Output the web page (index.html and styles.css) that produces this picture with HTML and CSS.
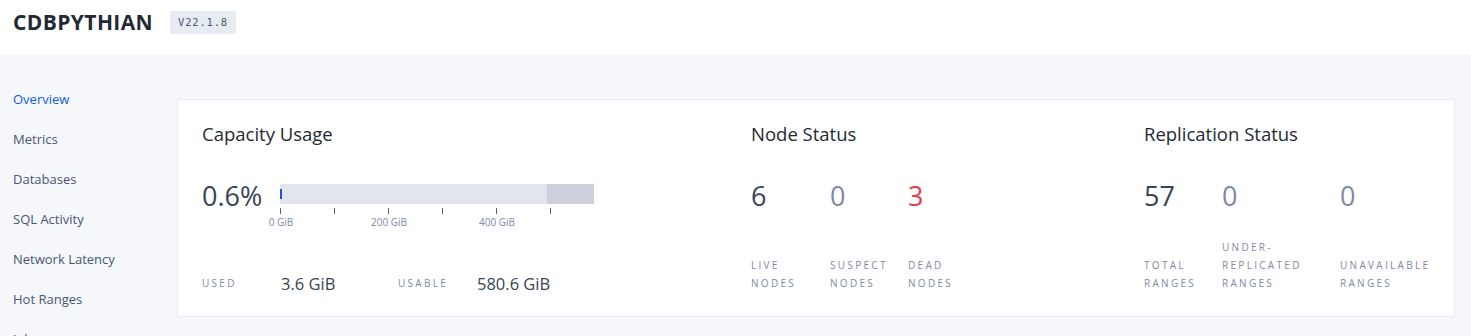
FILE: index.html
```html
<!DOCTYPE html>
<html>
<head>
<meta charset="utf-8">
<link rel="stylesheet" href="styles.css">
</head>
<body>
<header class="topbar">
  <div class="cluster-name">CDBPYTHIAN</div>
  <div class="version">V22.1.8</div>
</header>
<div class="layout">
  <nav class="sidenav">
    <a class="nav-item active">Overview</a>
    <a class="nav-item">Metrics</a>
    <a class="nav-item">Databases</a>
    <a class="nav-item">SQL Activity</a>
    <a class="nav-item">Network Latency</a>
    <a class="nav-item">Hot Ranges</a>
    <a class="nav-item">Jobs</a>
  </nav>
  <main class="content">
    <section class="summary-card">
      <div class="section capacity">
        <h2 class="section-title">Capacity Usage</h2>
        <div class="cap-row">
          <div class="cap-pct">0.6%</div>
          <div class="cap-chart">
            <div class="bar">
              <div class="bar-avail"></div>
              <div class="bar-used"></div>
            </div>
            <div class="ticks">
              <div class="tick"><span class="tick-label">0 GiB</span></div>
              <div class="tick"></div>
              <div class="tick"><span class="tick-label">200 GiB</span></div>
              <div class="tick"></div>
              <div class="tick"><span class="tick-label">400 GiB</span></div>
              <div class="tick"></div>
            </div>
          </div>
        </div>
        <div class="cap-totals">
          <span class="stat-label cap-label">USED</span>
          <span class="cap-value cap-value-used">3.6 GiB</span>
          <span class="stat-label cap-label">USABLE</span>
          <span class="cap-value">580.6 GiB</span>
        </div>
      </div>
      <div class="section">
        <h2 class="section-title">Node Status</h2>
        <div class="stats">
          <div class="stat w79"><div class="stat-num dark">6</div><div class="stat-label">LIVE NODES</div></div>
          <div class="stat w78"><div class="stat-num muted">0</div><div class="stat-label">SUSPECT NODES</div></div>
          <div class="stat w79"><div class="stat-num red">3</div><div class="stat-label">DEAD NODES</div></div>
        </div>
      </div>
      <div class="section">
        <h2 class="section-title">Replication Status</h2>
        <div class="stats">
          <div class="stat w78"><div class="stat-num dark">57</div><div class="stat-label">TOTAL RANGES</div></div>
          <div class="stat w118"><div class="stat-num muted">0</div><div class="stat-label">UNDER-REPLICATED RANGES</div></div>
          <div class="stat w100"><div class="stat-num muted">0</div><div class="stat-label">UNAVAILABLE RANGES</div></div>
        </div>
      </div>
    </section>
  </main>
</div>
</body>
</html>
```

FILE: styles.css
```css
* { box-sizing: border-box; }
html, body { margin: 0; padding: 0; }
body {
  font-family: "Open Sans", "Noto Sans", sans-serif;
  background: #f5f7fa;
  color: #242a35;
  width: 1471px;
  height: 336px;
  overflow: hidden;
}

.topbar {
  height: 55px;
  background: #ffffff;
  display: flex;
  align-items: center;
  padding-left: 13px;
}
.cluster-name {
  font-size: 21px;
  font-weight: 700;
  letter-spacing: 0.4px;
  color: #242a35;
  padding-bottom: 11px;
}
.version {
  margin-left: 17px;
  margin-bottom: 11px;
  height: 23px;
  padding: 0 8px;
  display: flex;
  align-items: center;
  background: #e7ecf3;
  border-radius: 2px;
  font-family: "DejaVu Sans Mono", "Liberation Mono", monospace;
  font-size: 10.5px;
  letter-spacing: 0.8px;
  color: #475872;
}

.layout {
  display: flex;
}
.sidenav {
  width: 177px;
  flex: none;
  display: flex;
  flex-direction: column;
  padding-top: 34px;
}
.nav-item {
  height: 40px;
  line-height: 20px;
  padding-left: 13px;
  font-size: 13px;
  color: #475872;
  cursor: pointer;
}
.nav-item.active {
  color: #0f5fd9;
}

.content {
  flex: 1;
  padding-top: 44px;
  padding-right: 16px;
}
.summary-card {
  background: #ffffff;
  border: 1px solid #e7ecf3;
  border-radius: 2px;
  height: 218px;
  display: grid;
  grid-template-columns: 549px 393px 1fr;
  padding: 22px 0 24px 24px;
}
.section {
  display: flex;
  flex-direction: column;
  min-width: 0;
}
.section-title {
  margin: 0;
  font-size: 18.5px;
  font-weight: 400;
  line-height: 24px;
  color: #242a35;
}

.stats {
  display: flex;
  margin-top: 34px;
  flex: 1;
}
.stat {
  display: flex;
  flex-direction: column;
  justify-content: space-between;
}
.w78 { width: 78px; }
.w79 { width: 79px; }
.w100 { width: 110px; }
.w118 { width: 118px; }
.stat-num {
  font-size: 27px;
  line-height: 32px;
}
.dark { color: #394455; }
.muted { color: #7e89a9; }
.red { color: #e0404a; }
.stat-label {
  font-size: 10px;
  line-height: 18px;
  letter-spacing: 2.3px;
  color: #7e89a9;
  padding-right: 6px;
}

.cap-row {
  display: flex;
  margin-top: 34px;
  height: 32px;
}
.cap-pct {
  width: 78px;
  flex: none;
  font-size: 27px;
  line-height: 32px;
  color: #394455;
}
.cap-chart {
  padding-top: 4px;
}
.bar {
  position: relative;
  width: 314px;
  height: 20px;
  display: flex;
}
.bar-avail {
  width: 267px;
  background: #e2e4ee;
}
.bar-used {
  flex: 1;
  background: #cdd0dc;
}
.bar::before {
  content: "";
  position: absolute;
  left: 0;
  top: 5px;
  width: 2px;
  height: 10px;
  background: #1a56d6;
}
.ticks {
  display: flex;
  margin-top: 4px;
}
.tick {
  position: relative;
  width: 54px;
  height: 6px;
  border-left: 1px solid #5a6478;
}
.tick-label {
  position: absolute;
  top: 7px;
  left: -30px;
  width: 60px;
  text-align: center;
  font-size: 10px;
  color: #7e89a9;
  white-space: nowrap;
}
.cap-totals {
  margin-top: auto;
  display: flex;
  align-items: center;
  height: 18px;
}
.cap-label {
  width: 79px;
}
.cap-value {
  font-size: 16.5px;
  color: #394455;
}
.cap-value-used {
  width: 117px;
}
```
